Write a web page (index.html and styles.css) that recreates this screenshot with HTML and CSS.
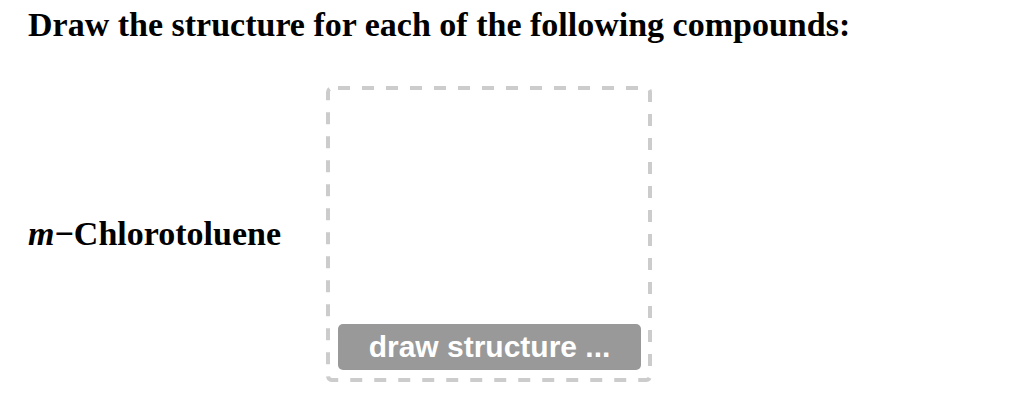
FILE: index.html
```html
<!DOCTYPE html>
<html>
<head>
<meta charset="utf-8">
<link rel="stylesheet" href="styles.css">
</head>
<body>
<h1 class="title">Draw the structure for each of the following compounds:</h1>
<div class="row">
  <div class="label"><i>m</i>&minus;Chlorotoluene</div>
  <div class="canvas">
    <svg class="frame" width="326" height="296" viewBox="0 0 326 296">
      <rect x="2" y="2" width="322" height="292" rx="4" ry="4" fill="none" stroke="#cccccc" stroke-width="4" stroke-dasharray="12 12" stroke-dashoffset="-6"/>
    </svg>
    <div class="btn">draw structure ...</div>
  </div>
</div>
</body>
</html>
```

FILE: styles.css
```css
html, body {
  margin: 0;
  padding: 0;
  background: #ffffff;
}
body {
  padding: 6px 28px 0 28px;
  font-family: "Liberation Serif", "Times New Roman", serif;
  color: #000;
}
.title {
  margin: 0;
  font-size: 34px;
  font-weight: bold;
  line-height: 38px;
}
.row {
  display: flex;
  align-items: center;
  margin-top: 42px;
}
.label {
  width: 298px;
  font-size: 34px;
  font-weight: bold;
  line-height: 38px;
}
.canvas {
  position: relative;
  width: 326px;
  height: 296px;
}
.frame {
  position: absolute;
  left: 0;
  top: 0;
  display: block;
}
.btn {
  position: absolute;
  left: 12px;
  right: 11px;
  bottom: 12px;
  height: 46px;
  background: #999999;
  border-radius: 5px;
  color: #ffffff;
  font-family: "Liberation Sans", Arial, sans-serif;
  font-weight: bold;
  font-size: 30px;
  line-height: 46px;
  text-align: center;
}
```
